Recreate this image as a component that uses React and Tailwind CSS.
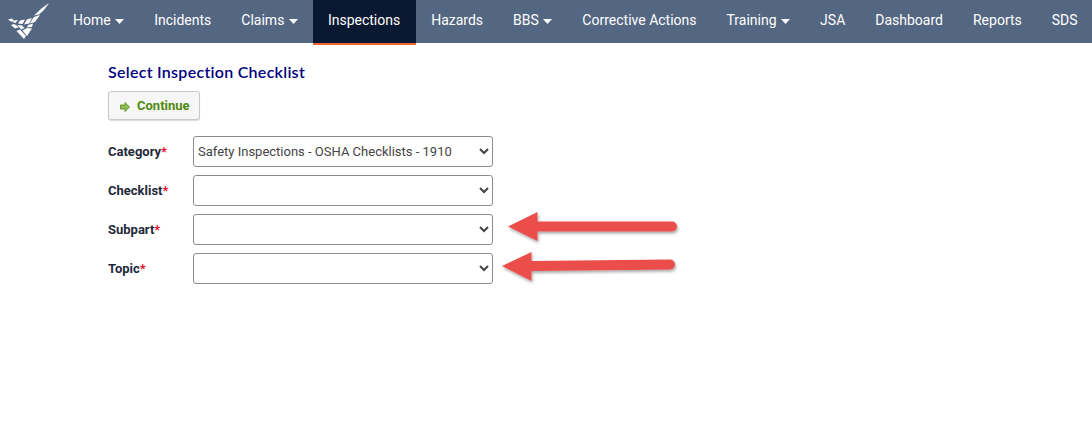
import React from "react";

const navItems = [
  { label: "Home", caret: true },
  { label: "Incidents" },
  { label: "Claims", caret: true },
  { label: "Inspections", active: true },
  { label: "Hazards" },
  { label: "BBS", caret: true },
  { label: "Corrective Actions" },
  { label: "Training", caret: true },
  { label: "JSA" },
  { label: "Dashboard" },
  { label: "Reports" },
  { label: "SDS" },
];

const fields = [
  { label: "Category", value: "Safety Inspections - OSHA Checklists - 1910" },
  { label: "Checklist", value: "" },
  { label: "Subpart", value: "" },
  { label: "Topic", value: "" },
];

const Logo = () => (
  <svg width="58" height="43" viewBox="0 0 58 43" className="shrink-0" fill="white">
    <polygon points="49,3 42,8 34,15.5 39,14.5 44,10" />
    <polygon points="40,15 34,17 29.5,23.5 35,22" />
    <polygon points="32,18 27,19.5 24,24.5 29,23.5" />
    <polygon points="25,19.5 20,20.5 18,23.5 22.5,24" />
    <polygon points="18,20 14,20.5 12.5,22 15.5,23" />
    <polygon points="12,18.5 8,19.5 11.5,22 14,20.5" />
    <polygon points="14,24 11,25 15,28.5 19,27" />
    <polygon points="22,25.5 17.5,25 21,29.5 24.5,28" />
    <polygon points="20,29.5 16.5,31 24,39 26,36" />
    <polygon points="27,28 22.5,30.5 27,36 32,28.5" />
    <polygon points="33,23.5 28,25 27,27.5 32,27" />
  </svg>
);

const Caret = () => (
  <svg width="9" height="5" viewBox="0 0 9 5" className="ml-[4.5px] mt-[2px]" fill="white">
    <path d="M0 0 H9 L4.5 5 Z" />
  </svg>
);

const Arrows = () => (
  <svg width="200" height="90" viewBox="0 0 200 90" className="absolute left-[490px] top-[200px]">
    <defs>
      <filter id="arrowShadow" x="-10%" y="-20%" width="120%" height="150%">
        <feDropShadow dx="1" dy="2" stdDeviation="1.5" floodColor="#000" floodOpacity="0.35" />
      </filter>
    </defs>
    <g fill="#eb4d4b" filter="url(#arrowShadow)">
      <path d="M18 26.5 L47.5 12 V21.5 H182 A5 5 0 0 1 182 31.5 H47.5 V41 Z" />
      <path d="M12 66 L41.5 52 V61 L180 59.5 A5 5 0 0 1 180 69.5 L41.5 71 V81 Z" />
    </g>
  </svg>
);

const App = () => {
  return (
    <div className="relative h-[429px] w-[1092px] overflow-hidden bg-white font-['Roboto',sans-serif]">
      <nav className="flex h-[43px] items-center bg-[#536682]">
        <Logo />
        <ul className="flex h-full items-stretch text-[14px] text-white">
          {navItems.map((item) => (
            <li
              key={item.label}
              className={
                item.active
                  ? "flex h-[45px] items-center whitespace-nowrap border-b-2 border-[#f0642d] bg-[#0a1931] pb-[2px] pl-[15px] pr-[16px]"
                  : "flex items-center whitespace-nowrap px-[15px] pb-[2px]"
              }
            >
              {item.label}
              {item.caret && <Caret />}
            </li>
          ))}
        </ul>
      </nav>

      <main className="pl-[108px] pt-[19px]">
        <h1 className="font-['Lato',sans-serif] text-[16px] font-semibold leading-[20px] tracking-[0.28px] text-[#000080]">
          Select Inspection Checklist
        </h1>

        <button className="mt-[9px] flex h-[29px] w-[92px] items-center rounded-[3px] border border-[#c8c8c8] bg-[#f6f6f6] pl-[11px] text-[13px] font-bold text-[#4f8a10] shadow-[0_1px_1px_rgba(0,0,0,0.15)]">
          <svg width="10" height="10" viewBox="0 0 10 10" className="mr-[7px] mt-[2px]">
            <path d="M0.5 3 H5 V0.5 L9.5 5 L5 9.5 V7 H0.5 Z" fill="#8dbb55" stroke="#4f8a10" strokeWidth="0.8" />
          </svg>
          Continue
        </button>

        <div className="mt-[16px] flex flex-col gap-[8px]">
          {fields.map((field) => (
            <div key={field.label} className="flex h-[31px] items-center">
              <label className="w-[85px] text-[13px] font-bold text-[#1f2a3a]">
                {field.label}
                <span className="text-[#e8112d]">*</span>
              </label>
              <select
                defaultValue={field.value}
                className="h-[31px] w-[300px] rounded-[3px] border border-[#8c8c8c] bg-white text-[13px] text-[#444]"
              >
                <option value={field.value}>{field.value}</option>
              </select>
            </div>
          ))}
        </div>
      </main>

      <Arrows />
    </div>
  );
};

export default App;
